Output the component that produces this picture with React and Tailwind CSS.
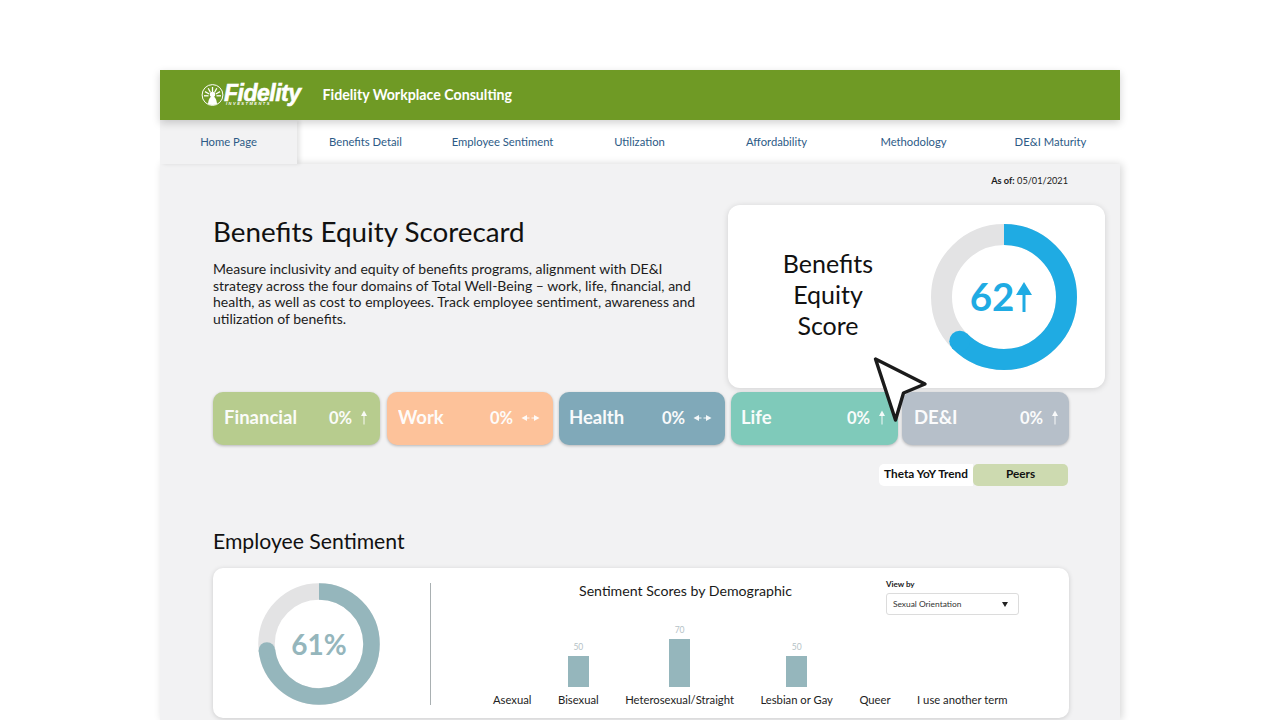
import React from 'react'

const NAV = ['Benefits Detail', 'Employee Sentiment', 'Utilization', 'Affordability', 'Methodology', 'DE&I Maturity']

const TILES = [
  { name: 'Financial', bg: 'bg-[#b7cc8e]', trend: 'up', box: 'w-[167px] pl-[11px] pr-[12px]' },
  { name: 'Work', bg: 'bg-[#fdc29a]', trend: 'flat', box: 'w-[166px] ml-[7px] pl-[11px] pr-[13px]' },
  { name: 'Health', bg: 'bg-[#80a9b9]', trend: 'flat', box: 'w-[166px] ml-[6px] pl-[10px] pr-[13px]' },
  { name: 'Life', bg: 'bg-[#7fcaba]', trend: 'up', box: 'w-[167px] ml-[6px] pl-[10px] pr-[12px]' },
  { name: 'DE&I', bg: 'bg-[#b6bfc9]', trend: 'up', box: 'w-[167px] ml-[4px] pl-[12px] pr-[10px]' },
]

const BARS = [
  { label: 'Asexual' },
  { label: 'Bisexual', value: 50, h: 'h-[31px]' },
  { label: 'Heterosexual/Straight', value: 70, h: 'h-[48px]' },
  { label: 'Lesbian or Gay', value: 50, h: 'h-[31px]' },
  { label: 'Queer' },
  { label: 'I use another term' },
]

// arc starts flat at 12 o'clock, ends with a round cap
function Donut({ size, r, stroke, degrees, color, children }) {
  const c = size / 2
  const len = 2 * Math.PI * r
  const rad = (degrees * Math.PI) / 180
  return (
    <div className="relative shrink-0 flex items-center justify-center" style={{ width: size, height: size }}>
      <svg width={size} height={size} className="absolute inset-0">
        <circle cx={c} cy={c} r={r} fill="none" stroke="#e3e3e4" strokeWidth={stroke} />
        <circle
          cx={c}
          cy={c}
          r={r}
          fill="none"
          stroke={color}
          strokeWidth={stroke}
          strokeDasharray={`${(len * degrees) / 360} ${len}`}
          transform={`rotate(-90 ${c} ${c})`}
        />
        <circle cx={c + r * Math.sin(rad)} cy={c - r * Math.cos(rad)} r={stroke / 2} fill={color} />
      </svg>
      {children}
    </div>
  )
}

function TrendIcon({ trend }) {
  if (trend === 'up') {
    return (
      <svg width="8" height="15" viewBox="0 0 8 15" className="text-white/90">
        <path d="M4 0.5 L7 6 H1 Z" fill="currentColor" />
        <path d="M4 5 V14.5" stroke="currentColor" strokeWidth="1" />
      </svg>
    )
  }
  return (
    <svg width="19" height="8" viewBox="0 0 19 8" className="text-white/90">
      <path d="M0.5 4 L6 1 V7 Z" fill="currentColor" />
      <path d="M18.5 4 L13 1 V7 Z" fill="currentColor" />
      <path d="M5 4 H8.5 M10.5 4 H14" stroke="currentColor" strokeWidth="1" />
    </svg>
  )
}

function FidelityLogo() {
  return (
    <div className="flex items-center text-white">
      <svg width="23" height="24" viewBox="0 0 23 24">
        <circle cx="11.5" cy="12" r="10.4" fill="none" stroke="white" strokeWidth="1" />
        <g stroke="white" strokeWidth="1.3">
          <path d="M11.5 4 V9" />
          <path d="M7.2 5.2 L9.5 9.5" />
          <path d="M15.8 5.2 L13.5 9.5" />
          <path d="M4 8.6 L8.2 11" />
          <path d="M19 8.6 L14.8 11" />
          <path d="M3 12.8 H7.5" />
          <path d="M20 12.8 H15.5" />
        </g>
        <circle cx="11.5" cy="11.5" r="2.7" fill="white" />
        <path d="M7 21 C7.5 16 9 13.5 11.5 13.5 C14 13.5 15.5 16 16 21 C13 22.2 10 22.2 7 21 Z" fill="white" />
      </svg>
      <div className="flex flex-col items-start font-['Liberation_Sans',sans-serif]">
        <span className="text-[23px] leading-[18px] font-bold italic tracking-[-0.5px] [-webkit-text-stroke:0.6px_white]">Fidelity</span>
        <span className="text-[4px] leading-[4px] font-bold italic tracking-[1.5px] ml-[2px]">INVESTMENTS</span>
      </div>
    </div>
  )
}

export default function App() {
  return (
    <div className="relative w-[1280px] h-[720px] overflow-hidden bg-white font-['Lato',sans-serif] pt-[70px] pl-[160px]">
      <div className="w-[960px] h-[650px] flex flex-col">
        <header className="relative z-20 h-[50px] shrink-0 bg-[#6f9a25] flex items-center pl-[41px] shadow-[0_3px_8px_rgba(0,0,0,0.18)]">
          <FidelityLogo />
          <span className="ml-[22px] text-white text-[14.2px] font-bold">Fidelity Workplace Consulting</span>
        </header>

        <nav className="relative z-10 h-[44px] shrink-0 grid grid-cols-[repeat(7,137px)] text-[11.25px] text-[#2c5a86]">
          <div className="bg-[#f2f2f3] flex items-center justify-center shadow-[3px_0_4px_rgba(0,0,0,0.1)]">Home Page</div>
          {NAV.map((t) => (
            <div key={t} className="flex items-center justify-center">{t}</div>
          ))}
        </nav>

        <main className="flex-1 bg-[#f2f2f3] shadow-[2px_0_8px_rgba(0,0,0,0.16)] pl-[53px] pr-[15px]">
          <p className="pt-[10px] pr-[37px] text-right text-[9.2px] leading-[13px] text-[#1a1a1a]">
            <b>As of:</b> 05/01/2021
          </p>

          <section className="mt-[18px] flex justify-between">
            <div className="w-[490px] pt-[8px]">
              <h1 className="text-[27.8px] leading-[38px] text-[#111]">Benefits Equity Scorecard</h1>
              <p className="mt-[10px] text-[14px] leading-[16.7px] text-[#1c1c1c]">
                Measure inclusivity and equity of benefits programs, alignment with DE&amp;I strategy across the four domains of Total Well-Being – work, life, financial, and health, as well as cost to employees. Track employee sentiment, awareness and utilization of benefits.
              </p>
            </div>

            <div className="w-[377px] h-[183px] bg-white rounded-[12px] shadow-[0_1px_6px_rgba(0,0,0,0.14)] flex items-center pl-[40px]">
              <div className="w-[120px] text-center text-[25px] leading-[31px] text-[#111] pb-[4px]">
                Benefits<br />Equity<br />Score
              </div>
              <div className="ml-[43px]">
                <Donut size={146} r={62.5} stroke={21} degrees={225} color="#1fabe3">
                  <span className="relative right-[3px] flex items-center text-[#1fabe3] text-[38.5px] font-bold leading-none">
                    62
                    <svg width="16" height="30" viewBox="0 0 16 30" className="ml-[2px]">
                      <path d="M8 0 L16 13 H0 Z" fill="currentColor" />
                      <path d="M8 10 V30" stroke="currentColor" strokeWidth="3" />
                    </svg>
                  </span>
                </Donut>
              </div>
            </div>
          </section>

          <section className="mt-[4px] w-[856px] flex">
            {TILES.map((t) => (
              <div key={t.name} className={`${t.box} ${t.bg} h-[53px] rounded-[10px] shadow-[0_1px_3px_rgba(0,0,0,0.25)] flex items-center pb-[2px] text-white`}>
                <span className="text-[18.5px] font-bold opacity-95">{t.name}</span>
                <span className="ml-auto text-[16.5px] leading-[20px] mt-[1px] font-bold opacity-95">0%</span>
                <span className="ml-[8px]">
                  <TrendIcon trend={t.trend} />
                </span>
              </div>
            ))}
          </section>

          <div className="mt-[19px] w-[855px] flex justify-end text-[11.8px] leading-[14px] font-bold text-[#111]">
            <div className="w-[94px] h-[22px] bg-white rounded-l-[5px] flex items-center justify-center pb-[2px]">Theta YoY Trend</div>
            <div className="w-[95px] h-[22px] bg-[#cddab0] rounded-[5px] flex items-center justify-center pb-[2px]">Peers</div>
          </div>

          <h2 className="mt-[41px] text-[21.2px] leading-[28px] text-[#111]">Employee Sentiment</h2>

          <section className="mt-[13px] w-[856px] h-[150px] bg-white rounded-[10px] shadow-[0_1px_5px_rgba(0,0,0,0.16)] flex items-center">
            <div className="ml-[45px] mt-[2px]">
              <Donut size={122} r={52.5} stroke={16.5} degrees={263} color="#95b6bc">
                <span className="text-[#95b6bc] text-[28px] font-bold leading-none">61%</span>
              </Donut>
            </div>
            <div className="ml-[50px] mt-[2px] w-px h-[122px] bg-[#a9b0b2]" />
            <div className="ml-[62px] h-full flex flex-col">
              <div className="flex items-start h-[47px]">
                <div className="ml-[86px] pt-[14px] text-[14.15px] leading-[18px] text-[#1a1a1a]">Sentiment Scores by Demographic</div>
                <div className="ml-[94px] pt-[11px]">
                  <div className="text-[8px] leading-[11px] font-bold text-[#1a1a1a]">View by</div>
                  <div className="mt-[3px] w-[133px] h-[22px] bg-white border border-[#dcdcdc] rounded-[3px] flex items-center justify-between pl-[6px] pr-[10px] text-[8.4px] text-[#333]">
                    Sexual Orientation
                    <span className="w-0 h-0 border-x-[3px] border-x-transparent border-t-[5px] border-t-[#222]" />
                  </div>
                </div>
              </div>
              <div className="flex-1 flex gap-[26.5px] items-end pb-[11px]">
                {BARS.map((b) => (
                  <div key={b.label} className="flex flex-col items-center">
                    {b.value && <span className="text-[8.5px] leading-[11px] text-[#b5c2c6] mb-[3px]">{b.value}</span>}
                    {b.value && <div className={`${b.h} w-[21px] bg-[#95b6bc]`} />}
                    <span className="mt-[6px] text-[11.25px] leading-[14px] whitespace-nowrap text-[#222]">{b.label}</span>
                  </div>
                ))}
              </div>
            </div>
          </section>
        </main>
      </div>

      {/* mouse pointer sitting over the score card */}
      <svg width="62" height="70" viewBox="0 0 62 70" className="absolute left-[870px] top-[354px] z-30">
        <path d="M5.5 5 L55 30 L33.5 39 L25.5 66 Z" fill="white" stroke="#1b1b1b" strokeWidth="3.4" strokeLinejoin="round" />
      </svg>
    </div>
  )
}
